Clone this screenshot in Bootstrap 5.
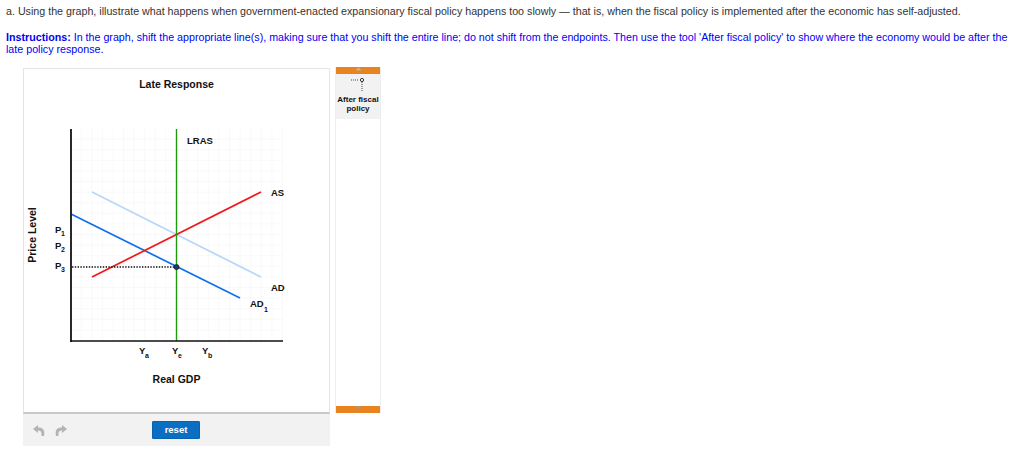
<!DOCTYPE html>
<html lang="en">
<head>
  <meta charset="UTF-8">
  <title>Late Response</title>
  <link href="https://cdn.jsdelivr.net/npm/bootstrap@5.3.0/dist/css/bootstrap.min.css" rel="stylesheet">
  <style>
    body { font-family: "Liberation Sans", Arial, sans-serif; background: #fff; padding: 5px 6px 0 6px; }
    .question { font-size: 10.7px; line-height: 12px; color: #333; margin-bottom: 14px; }
    .instructions { font-size: 10.7px; line-height: 12px; color: #0000f5; margin-bottom: 13px; }
    .workspace { margin-left: 17px; gap: 5px; align-items: flex-start; }
    .graph-panel { width: 307px; }
    .graph-area { height: 346px; border: 1px solid #e4e4e4; border-bottom: 2px solid #c8c8c8; background: #fff; }
    .graph-area svg { display: block; margin: -1px; }
    .graph-area text { font-family: "Liberation Sans", Arial, sans-serif; font-weight: 700; font-size: 9.5px; fill: #111; }
    .graph-area text.big { font-size: 10.5px; }
    .graph-area text.sub { font-size: 7px; }
    .graph-toolbar { height: 32px; background: #f2f2f2; padding: 0 130px 0 10px; }
    .undo-group { gap: 10px; }
    .reset-btn { width: 48px; height: 18px; padding: 0; font-size: 9.5px; font-weight: 700; line-height: 16px; color: #fff; background: #0a6fc2; border: 1px solid #0a62ad; border-radius: 1px; }
    .tool-palette { width: 46px; height: 346px; border-left: 1px solid #eee; border-right: 1px solid #eee; margin-top: -1px; }
    .palette-cap { height: 7px; background: #e8831f; }
    .palette-item { height: 45px; background: #f2f2f2; font-size: 8px; line-height: 9px; font-weight: 700; color: #111; padding-top: 3px; }
    .palette-label { margin-top: 4px; }
    .palette-rest { height: 287px; }
  </style>
</head>
<body>
  <p class="question">a. Using the graph, illustrate what happens when government-enacted expansionary fiscal policy happens too slowly — that is, when the fiscal policy is implemented after the economic has self-adjusted.</p>
  <p class="instructions"><strong>Instructions:</strong> In the graph, shift the appropriate line(s), making sure that you shift the entire line; do not shift from the endpoints. Then use the tool 'After fiscal policy' to show where the economy would be after the late policy response.</p>

  <div class="d-flex workspace">
    <div class="graph-panel">
      <div class="graph-area">
        <!-- svg coords: page x minus 23, page y minus 68 -->
        <svg width="307" height="346" viewBox="23 68 307 346">
          <defs>
            <pattern id="gridCells" x="71" y="129" width="10.6" height="10.6" patternUnits="userSpaceOnUse">
              <path d="M10.6 0V10.6M0 10.6H10.6" stroke="#f3f3f3" stroke-width="1" fill="none"/>
            </pattern>
          </defs>
          <rect x="71" y="129" width="212" height="212" fill="url(#gridCells)"/>
          <text class="big" x="176.5" y="88" text-anchor="middle">Late Response</text>
          <text x="187" y="144">LRAS</text>
          <text x="271" y="196">AS</text>
          <text x="271" y="291">AD</text>
          <text x="250" y="307">AD</text><text class="sub" x="264" y="312">1</text>
          <text class="big" transform="translate(36,235) rotate(-90)" text-anchor="middle">Price Level</text>
          <text x="55" y="233">P</text><text class="sub" x="61" y="236">1</text>
          <text x="55" y="249">P</text><text class="sub" x="61" y="252">2</text>
          <text x="55" y="269">P</text><text class="sub" x="61" y="272">3</text>
          <text x="139" y="354">Y</text><text class="sub" x="145" y="358">a</text>
          <text x="172" y="354">Y</text><text class="sub" x="178" y="358">e</text>
          <text x="202" y="354">Y</text><text class="sub" x="208" y="358">b</text>
          <text class="big" x="176.5" y="383" text-anchor="middle">Real GDP</text>
          <line x1="92" y1="192" x2="261" y2="277" stroke="#b8d6fb" stroke-width="1.7"/>
          <line x1="71" y1="214" x2="240" y2="298" stroke="#0f6ff0" stroke-width="1.7"/>
          <line x1="92" y1="277" x2="261" y2="192" stroke="#f01818" stroke-width="1.7"/>
          <line x1="176.5" y1="129" x2="176.5" y2="341" stroke="#1f9a0c" stroke-width="1.4"/>
          <line x1="72" y1="267" x2="176" y2="267" stroke="#111" stroke-width="1.4" stroke-dasharray="1.4 1.4"/>
          <circle cx="176.5" cy="267" r="2.6" fill="#1b3f66" stroke="#111" stroke-width="0.6"/>
          <line x1="71" y1="129" x2="71" y2="342" stroke="#111" stroke-width="1.8"/>
          <line x1="70" y1="341" x2="283" y2="341" stroke="#111" stroke-width="1.6"/>
        </svg>
      </div>
      <div class="graph-toolbar d-flex align-items-center justify-content-between">
        <span class="d-flex undo-group">
          <svg width="12" height="11" viewBox="0 0 12 11"><path d="M5 0 0 4 5 8V5.500c2.800 0 3.700 1.300 3.500 5.500h2.500C12.300 5 9.800 2.500 5 2.500z" fill="#b4b4b4"/></svg>
          <svg width="12" height="11" viewBox="0 0 12 11"><path d="M7 0l5 4-5 4V5.500c-2.800 0-3.700 1.300-3.500 5.500H1C-0.300 5 2.200 2.500 7 2.500z" fill="#b4b4b4"/></svg>
        </span>
        <button type="button" class="btn reset-btn">reset</button>
      </div>
    </div>
    <div class="tool-palette">
      <div class="palette-cap d-flex justify-content-center">
        <svg width="7" height="4" viewBox="0 0 7 4"><path d="M3.500 0.500 6.500 3.500H0.500z" fill="#c9b49c"/></svg>
      </div>
      <div class="palette-item text-center">
        <svg class="d-block mx-auto" width="14" height="14" viewBox="0 0 14 14">
          <path d="M0 3H8" stroke="#444" stroke-width="1" stroke-dasharray="1 1"/>
          <path d="M11 5V14" stroke="#444" stroke-width="1" stroke-dasharray="1 1"/>
          <circle cx="11" cy="3" r="1.600" fill="#fff" stroke="#333" stroke-width="1"/>
        </svg>
        <div class="palette-label">After fiscal policy</div>
      </div>
      <div class="palette-rest"></div>
      <div class="palette-cap d-flex justify-content-center">
        <svg width="7" height="4" viewBox="0 0 7 4"><path d="M0.500 0.500H6.500L3.500 3.500z" fill="#9a9a9a"/></svg>
      </div>
    </div>
  </div>
</body>
</html>
